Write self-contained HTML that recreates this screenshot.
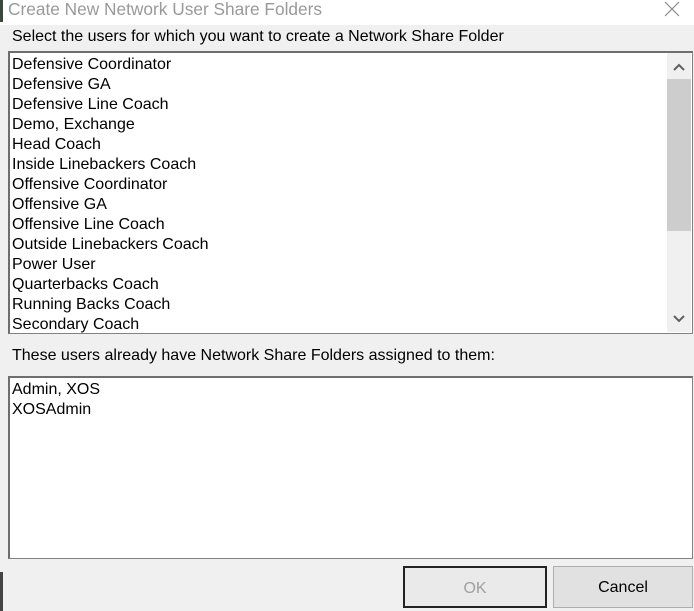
<!DOCTYPE html>
<html><head><style>
body{margin:0;width:694px;height:611px;overflow:hidden;background:#f0f0f0;font-family:"Liberation Sans",Arial,sans-serif;position:relative}
.t{position:absolute;left:0;top:0;width:694px;height:25px;background:#fff}
.tt{position:absolute;left:8px;top:-1px;font-size:17.3px;color:#999}
.lbl{position:absolute;left:12px;font-size:16px;color:#000}
.box{position:absolute;background:#fff;border:1px solid #828282;border-top:2px solid #6e6e6e;border-left:2px solid #6e6e6e;box-sizing:border-box}
.r{height:20px;line-height:20px;font-size:16px;padding-left:2px;white-space:nowrap}
.sb{position:absolute;left:667px;top:53px;width:24px;height:279px;background:#f0f0f0}
.th{position:absolute;left:0;top:26px;width:24px;height:152px;background:#cdcdcd}
.btn{position:absolute;top:566px;height:42px;box-sizing:border-box;border:1px solid #adadad;background:#e1e1e1;text-align:center;line-height:42px;font-size:16px}
</style></head><body>
<div class="t"><div class="tt">Create New Network User Share Folders</div>
<svg style="position:absolute;left:664px;top:1px" width="16" height="16"><path d="M1 1L15 15M15 1L1 15" stroke="#888" stroke-width="1.2" fill="none"/></svg></div>
<div style="position:absolute;left:0;top:0;width:3px;height:22px;background:#3a4a3a"></div>
<div class="lbl" style="top:28px">Select the users for which you want to create a Network Share Folder</div>
<div class="box" style="left:8px;top:51px;width:685px;height:283px;padding-top:2px;padding-left:0">
<div class="r">Defensive Coordinator</div><div class="r">Defensive GA</div><div class="r">Defensive Line Coach</div><div class="r">Demo, Exchange</div><div class="r">Head Coach</div><div class="r">Inside Linebackers Coach</div><div class="r">Offensive Coordinator</div><div class="r">Offensive GA</div><div class="r">Offensive Line Coach</div><div class="r">Outside Linebackers Coach</div><div class="r">Power User</div><div class="r">Quarterbacks Coach</div><div class="r">Running Backs Coach</div><div class="r">Secondary Coach</div>
</div>
<div class="sb"><div class="th"></div>
<svg style="position:absolute;left:6px;top:10px" width="12" height="8"><path d="M1 7L6 2L11 7" stroke="#606060" stroke-width="2" fill="none"/></svg>
<svg style="position:absolute;left:6px;top:262px" width="12" height="8"><path d="M1 1L6 6L11 1" stroke="#606060" stroke-width="2" fill="none"/></svg>
</div>
<div class="lbl" style="top:347px">These users already have Network Share Folders assigned to them:</div>
<div class="box" style="left:8px;top:376px;width:685px;height:183px;padding-top:2px">
<div class="r">Admin, XOS</div><div class="r">XOSAdmin</div>
</div>
<div class="btn" style="left:403px;width:144px;border:2px solid #222;color:#a0a0a0;background:#eaeaea">OK</div>
<div class="btn" style="left:553px;width:140px">Cancel</div>
<div style="position:absolute;left:0;top:572px;width:3px;height:39px;background:#444"></div>
</body></html>
